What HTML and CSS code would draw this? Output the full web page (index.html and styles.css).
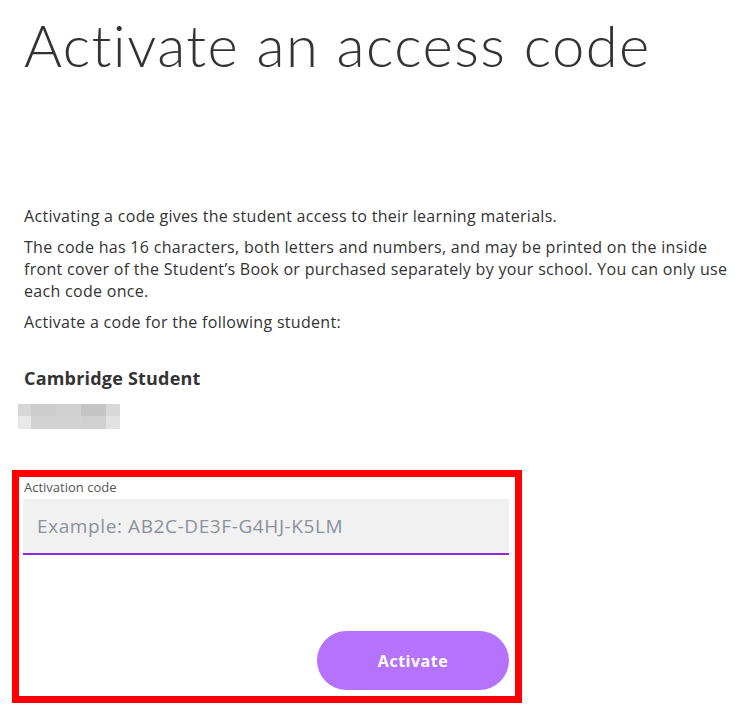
FILE: index.html
```html
<!DOCTYPE html>
<html lang="en">
<head>
<meta charset="utf-8">
<title>Activate an access code</title>
<link rel="stylesheet" href="styles.css">
</head>
<body>
<main class="page">
  <h1 class="title">Activate an access code</h1>
  <section class="intro">
    <p>Activating a code gives the student access to their learning materials.</p>
    <p>The code has 16 characters, both letters and numbers, and may be printed on the inside front cover of the Student’s Book or purchased separately by your school. You can only use each code once.</p>
    <p>Activate a code for the following student:</p>
  </section>
  <section class="student">
    <div class="student-name">Cambridge Student</div>
    <div class="blurred" aria-hidden="true">
      <span></span><span></span><span></span><span></span><span></span>
      <span></span><span></span><span></span><span></span><span></span>
    </div>
  </section>
  <form class="activation-box">
    <label class="field-label" for="code">Activation code</label>
    <input class="field-input" id="code" type="text" placeholder="Example: AB2C-DE3F-G4HJ-K5LM">
    <div class="actions">
      <button type="button" class="btn-activate">Activate</button>
    </div>
  </form>
</main>
</body>
</html>
```
FILE: styles.css
```css
html, body {
  margin: 0;
  padding: 0;
  background: #ffffff;
}
body {
  font-family: "Open Sans", "Lato", sans-serif;
  color: #333333;
}
.page {
  padding: 0 8px 0 24px;
}
.title {
  margin: 10px 0 0 0;
  font-family: "Lato", "Open Sans", sans-serif;
  font-size: 58px;
  line-height: 70px;
  font-weight: 300;
  color: #333333;
  letter-spacing: 1.45px;
}
.intro {
  margin-top: 125px;
  font-size: 16px;
  line-height: 22px;
  letter-spacing: 0.3px;
  color: #333333;
}
.intro p {
  margin: 0 0 9px 0;
}
.student {
  margin-top: 33px;
}
.student-name {
  font-size: 18px;
  font-weight: 700;
  line-height: 24px;
  letter-spacing: 0.2px;
}
.blurred {
  margin: 14px 0 0 -6px;
  display: grid;
  grid-template-columns: 13px 25px 25px 25px 14px;
  grid-template-rows: 12px 13px;
  width: 102px;
}
.blurred span:nth-child(1) { background: #d6d6d6; }
.blurred span:nth-child(2) { background: #cdcdcd; }
.blurred span:nth-child(3) { background: #d1d1d1; }
.blurred span:nth-child(4) { background: #c4c4c4; }
.blurred span:nth-child(5) { background: #d8d8d8; }
.blurred span:nth-child(6) { background: #e8e8e8; }
.blurred span:nth-child(7) { background: #d2d2d2; }
.blurred span:nth-child(8) { background: #d3d3d3; }
.blurred span:nth-child(9) { background: #d0d0d0; }
.blurred span:nth-child(10) { background: #e2e2e2; }

.activation-box {
  margin: 41px 0 0 -12px;
  width: 486px;
  border: 7px solid #ff0000;
  padding: 2px 6px 6px 4px;
  display: flex;
  flex-direction: column;
}
.field-label {
  font-size: 13px;
  line-height: 17px;
  color: #555555;
  padding-left: 1px;
}
.field-input {
  margin-top: 3px;
  box-sizing: border-box;
  height: 56px;
  width: 100%;
  border: none;
  border-bottom: 2px solid #8a2be2;
  background: #f1f1f1;
  padding: 0 14px;
  font-family: "Open Sans", "Lato", sans-serif;
  font-size: 19px;
  letter-spacing: 0.6px;
  color: #333333;
  outline: none;
}
.field-input::placeholder {
  color: #8b919a;
  opacity: 1;
}
.actions {
  display: flex;
  justify-content: flex-end;
  margin-top: 76px;
}
.btn-activate {
  width: 192px;
  height: 59px;
  border: none;
  border-radius: 30px;
  background: #b472fd;
  color: #ffffff;
  font-family: "Open Sans", "Lato", sans-serif;
  font-size: 16px;
  font-weight: 700;
  letter-spacing: 0.5px;
  cursor: pointer;
}
```
